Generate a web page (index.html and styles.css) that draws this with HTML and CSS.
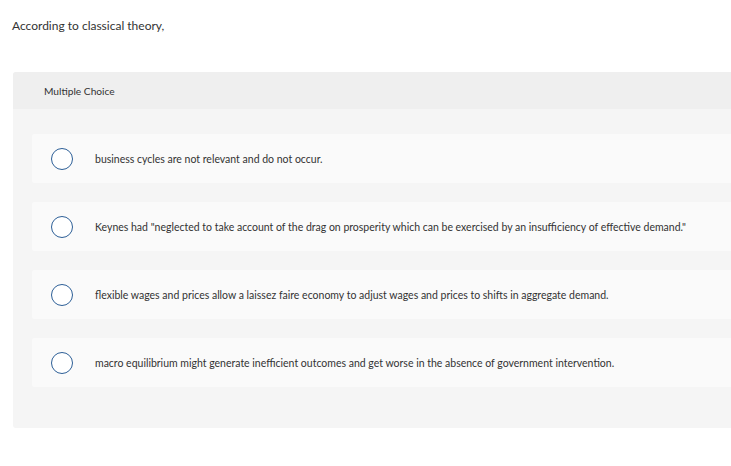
FILE: index.html
```html
<!DOCTYPE html>
<html>
<head>
<meta charset="utf-8">
<link rel="stylesheet" href="styles.css">
</head>
<body>
<div class="page">
  <p class="prompt">According to classical theory,</p>
  <div class="question">
    <div class="question-header">Multiple Choice</div>
    <div class="choices">
      <div class="choice"><span class="radio"></span><span class="choice-text">business cycles are not relevant and do not occur.</span></div>
      <div class="choice"><span class="radio"></span><span class="choice-text">Keynes had "neglected to take account of the drag on prosperity which can be exercised by an insufficiency of effective demand."</span></div>
      <div class="choice"><span class="radio"></span><span class="choice-text">flexible wages and prices allow a laissez faire economy to adjust wages and prices to shifts in aggregate demand.</span></div>
      <div class="choice"><span class="radio"></span><span class="choice-text">macro equilibrium might generate inefficient outcomes and get worse in the absence of government intervention.</span></div>
    </div>
  </div>
</div>
</body>
</html>
```
FILE: styles.css
```css
html, body {
  margin: 0;
  padding: 0;
  background: #ffffff;
  overflow: hidden;
}
.page {
  font-family: Lato, "Liberation Sans", sans-serif;
  color: #333333;
  width: 731px;
  height: 466px;
}
.prompt {
  margin: 0;
  padding: 19px 0 0 12px;
  font-size: 12px;
  line-height: 14px;
  height: 72px;
  box-sizing: border-box;
}
.question {
  margin-left: 13px;
  background: #f5f5f5;
  border-radius: 3px 0 0 3px;
  height: 356px;
}
.question-header {
  height: 37px;
  background: #efefef;
  border-radius: 3px 0 0 0;
  display: flex;
  align-items: center;
  padding-left: 31px;
  font-size: 10.2px;
  color: #333333;
}
.choices {
  display: flex;
  flex-direction: column;
  gap: 19px;
  padding: 25px 0 0 19px;
}
.choice {
  height: 49px;
  background: #fafafa;
  border-radius: 2px 0 0 2px;
  display: flex;
  align-items: center;
  padding-left: 19px;
}
.radio {
  width: 22px;
  height: 22px;
  box-sizing: border-box;
  border: 1.5px solid #2d5f97;
  border-radius: 50%;
  background: #ffffff;
  flex: none;
}
.choice-text {
  margin-left: 22px;
  font-size: 10.5px;
  color: #333333;
  white-space: nowrap;
}
```
